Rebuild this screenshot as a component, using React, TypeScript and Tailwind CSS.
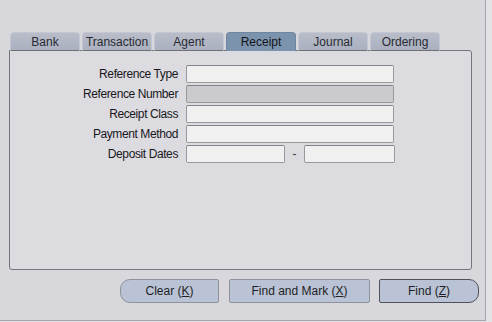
import React from 'react';

const tabs = ['Bank', 'Transaction', 'Agent', 'Receipt', 'Journal', 'Ordering'];

function Field({ width = 'w-[208px]', disabled = false }: { width?: string; disabled?: boolean }) {
  return (
    <div
      className={`${width} h-[18px] rounded-[2px] border border-[#98979c] border-t-[#838288] ${
        disabled ? 'bg-[#cbcacf]' : 'bg-[#f1f0f0]'
      }`}
    />
  );
}

function Row({ label, children }: { label: string; children: React.ReactNode }) {
  return (
    <div className="flex items-center h-[20px]">
      <div className="w-[168px] text-right text-[12px] tracking-[-0.4px] text-[#18181c] leading-none">{label}</div>
      <div className="ml-[8px] flex items-center">{children}</div>
    </div>
  );
}

function Mnemonic({ text, k }: { text: string; k: string }) {
  return (
    <span>
      {text} (<span className="underline underline-offset-1">{k}</span>)
    </span>
  );
}

export default function App() {
  return (
    <div className="w-[492px] h-[322px] bg-[#e3e2e6] font-['Liberation_Sans',Arial,sans-serif]">
      <div className="w-[486px] h-[321px] bg-[#d8d7dc] border-r border-b border-[#a6a5ab] pt-[32px] pl-[9px]">
        {/* Tabs */}
        <div className="flex gap-[2px] h-[19px] pl-[1px]">
          {tabs.map((t) => {
            const active = t === 'Receipt';
            return (
              <div
                key={t}
                className={`w-[70px] h-[19px] rounded-t-[4px] flex items-center justify-center text-[12px] leading-none border-t border-x ${
                  active
                    ? 'bg-[#7b93ad] border-[#6e86a1] text-[#15161c]'
                    : 'bg-gradient-to-b from-[#b9bdca] to-[#aab0bf] border-[#c4c7d1] text-[#2a2a32] border-b border-b-[#6f6f74]'
                }`}
              >
                {t}
              </div>
            );
          })}
        </div>

        {/* Panel */}
        <div className="w-[463px] h-[220px] -mt-[1px] border border-[#74747a] rounded-[3px] rounded-tl-none bg-[#dcdbe0] pt-[13px]">
          <Row label="Reference Type">
            <Field />
          </Row>
          <Row label="Reference Number">
            <Field disabled />
          </Row>
          <Row label="Receipt Class">
            <Field />
          </Row>
          <Row label="Payment Method">
            <Field />
          </Row>
          <Row label="Deposit Dates">
            <Field width="w-[99px]" />
            <span className="w-[19px] text-center text-[12px] text-[#333]">-</span>
            <Field width="w-[91px]" />
          </Row>
        </div>

        {/* Buttons */}
        <div className="flex mt-[9px] pl-[111px] gap-[10px] text-[12px] text-[#1f1f26]">
          <button className="w-[99px] h-[24px] rounded-l-[10px] rounded-r-[2px] border border-[#8d929c] bg-[#b9c3d5] flex items-center justify-center">
            <Mnemonic text="Clear" k="K" />
          </button>
          <button className="w-[141px] h-[24px] rounded-[2px] border border-[#8d929c] bg-[#b9c3d5] flex items-center justify-center">
            <Mnemonic text="Find and Mark" k="X" />
          </button>
          <button className="w-[100px] h-[24px] rounded-r-[10px] rounded-l-[2px] border border-[#4f525a] bg-[#b9c3d5] flex items-center justify-center -ml-[1px]">
            <Mnemonic text="Find" k="Z" />
          </button>
        </div>
      </div>
    </div>
  );
}
